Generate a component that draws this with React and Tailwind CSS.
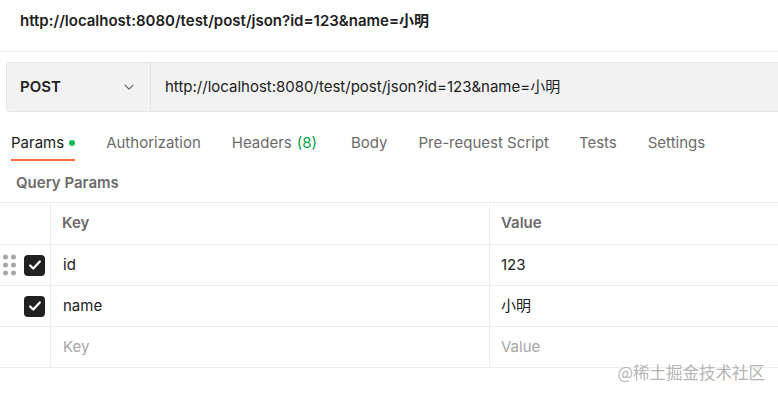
const url = "http://localhost:8080/test/post/json?id=123&name=小明";

const tabs = [
  { label: "Params", active: true, dot: true },
  { label: "Authorization" },
  { label: "Headers", count: "(8)" },
  { label: "Body" },
  { label: "Pre-request Script" },
  { label: "Tests" },
  { label: "Settings" },
];

function Check() {
  return (
    <div className="w-[21px] h-[21px] rounded-[4px] bg-[#212121] flex items-center justify-center">
      <svg className="w-[14px] h-[14px]" viewBox="0 0 16 16" fill="none">
        <path d="M2.5 8.5l3.5 3.5 7.5-8" stroke="white" strokeWidth={2.6} strokeLinecap="round" strokeLinejoin="round" />
      </svg>
    </div>
  );
}

function Grip() {
  return (
    <div className="grid grid-cols-2 gap-x-[3px] gap-y-[3px]">
      {[0, 1, 2, 3, 4, 5].map((i) => (
        <span key={i} className="w-[5px] h-[5px] rounded-full bg-[#a6a6a6]" />
      ))}
    </div>
  );
}

function Row({ k, v, checked, grip, placeholder }) {
  return (
    <div className="flex h-[41px] border-b border-[#ededed]">
      <div className="w-[51px] shrink-0 flex items-center border-r border-[#ededed] relative">
        {grip && (
          <div className="absolute left-[3px] top-1/2 -translate-y-1/2">
            <Grip />
          </div>
        )}
        {checked && (
          <div className="ml-[24px]">
            <Check />
          </div>
        )}
      </div>
      <div
        className={`w-[439px] shrink-0 flex items-center pl-[12px] border-r border-[#ededed] ${
          placeholder ? "text-[#a6a6a6]" : "text-[#212121]"
        }`}
      >
        {k}
      </div>
      <div className={`flex-1 flex items-center pl-[11px] ${placeholder ? "text-[#a6a6a6]" : "text-[#212121]"}`}>
        {v}
      </div>
    </div>
  );
}

export default function App() {
  return (
    <div
      className="w-[778px] h-[397px] bg-white overflow-hidden relative text-[15px] text-[#212121]"
      style={{ fontFamily: 'Inter, "Noto Sans CJK SC", sans-serif' }}
    >
      <div className="h-[52px] flex items-center pl-[20px] pb-[9px] font-semibold border-b border-[#ececec]">
        {url}
      </div>
      <div className="h-[10px]" />

      <div className="ml-[6px] h-[50px] flex rounded-l-[4px] border border-[#e6e6e6] border-r-0 bg-[#f2f2f2]">
        <div className="w-[144px] shrink-0 flex items-center justify-between pl-[13px] pr-[14px] border-r border-[#e4e4e4]">
          <span className="font-semibold">POST</span>
          <svg className="w-[14px] h-[14px] text-[#6b6b6b]" viewBox="0 0 16 16" fill="none">
            <path d="M3.5 6l4.5 4.5L12.5 6" stroke="currentColor" strokeWidth={1.3} strokeLinecap="round" strokeLinejoin="round" />
          </svg>
        </div>
        <div className="flex items-center pl-[14px]">{url}</div>
      </div>

      <div className="flex items-end h-[49px] pl-[11px] text-[#6b6b6b]">
        {tabs.map((t) => (
          <div
            key={t.label}
            className={`h-[29px] flex items-start ${t.count ? "mr-[34px]" : t.label === "Pre-request Script" ? "mr-[30px]" : "mr-[31px]"} ${
              t.active ? "border-b-2 border-[#ff6c37] text-[#212121]" : ""
            }`}
          >
            <span>{t.label}</span>
            {t.dot && <span className="w-[6px] h-[6px] rounded-full bg-[#0cbb52] ml-[5px] mt-[8px]" />}
            {t.count && <span className="ml-[5px] text-[#0a9e4f]">{t.count}</span>}
          </div>
        ))}
      </div>

      <div className="h-[41px] flex items-center pl-[16px] pt-[3px] font-semibold text-[#6b6b6b]">Query Params</div>

      <div className="border-t border-[#ededed]">
        <div className="flex h-[42px] border-b border-[#ededed] font-semibold text-[#6b6b6b]">
          <div className="w-[51px] shrink-0 border-r border-[#ededed]" />
          <div className="w-[439px] shrink-0 flex items-center pl-[11px] border-r border-[#ededed]">Key</div>
          <div className="flex-1 flex items-center pl-[11px]">Value</div>
        </div>
        <Row k="id" v="123" checked grip />
        <Row k="name" v="小明" checked />
        <Row k="Key" v="Value" placeholder />
      </div>

      <div
        className="absolute right-[13px] bottom-[12px] text-[16.5px] text-[#b5b5b5]"
        style={{ fontFamily: '"Noto Sans CJK SC", sans-serif' }}
      >
        @稀土掘金技术社区
      </div>
    </div>
  );
}
